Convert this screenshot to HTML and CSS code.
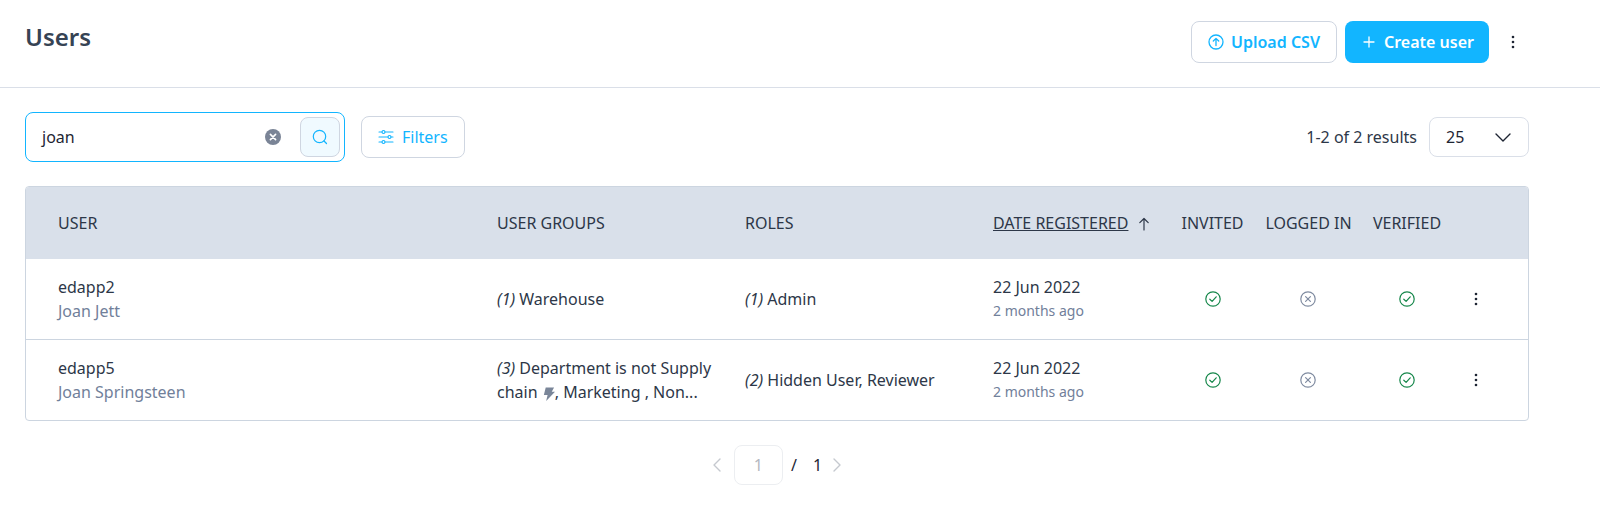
FILE: index.html
```html
<!DOCTYPE html>
<html lang="en">
<head>
<meta charset="utf-8">
<title>Users</title>
<link rel="stylesheet" href="styles.css">
</head>
<body>
<header class="topbar">
  <h1 class="title">Users</h1>
  <div class="actions">
    <button class="btn btn-outline">
      <svg class="ico16" viewBox="0 0 16 16" fill="none" stroke="currentColor" stroke-width="1.3" stroke-linecap="round" stroke-linejoin="round"><circle cx="8" cy="8" r="7"/><path d="M8 11.5v-7M5.3 7 8 4.4 10.7 7"/></svg>
      Upload CSV
    </button>
    <button class="btn btn-primary">
      <svg class="ico12" viewBox="0 0 12 12" fill="none" stroke="currentColor" stroke-width="1.3" stroke-linecap="round"><path d="M6 1v10M1 6h10"/></svg>
      Create user
    </button>
    <svg class="dots top-dots" viewBox="0 0 4 14" fill="#1e2533"><circle cx="2" cy="2" r="1.3"/><circle cx="2" cy="7" r="1.3"/><circle cx="2" cy="12" r="1.3"/></svg>
  </div>
</header>

<section class="toolbar">
  <div class="search">
    <span class="search-value">joan</span>
    <svg class="clear" viewBox="0 0 16 16"><circle cx="8" cy="8" r="8" fill="#7a8496"/><path d="M5.4 5.4l5.2 5.2M10.6 5.4l-5.2 5.2" stroke="#fff" stroke-width="1.6" stroke-linecap="round"/></svg>
    <span class="search-btn">
      <svg class="ico16" viewBox="0 0 16 16" fill="none" stroke="currentColor" stroke-width="1.2" stroke-linecap="round"><circle cx="7.5" cy="7.5" r="6.2"/><path d="M12 12l2.5 2.5"/></svg>
    </span>
  </div>
  <button class="btn-filter">
    <svg class="ico16" viewBox="0 0 16 16" fill="none" stroke="currentColor" stroke-width="1.1" stroke-linecap="round"><path d="M1 3h3M7 3h8M1 8h9M13 8h2M1 13h3M7 13h8"/><circle cx="5.5" cy="3" r="1.5"/><circle cx="11.5" cy="8" r="1.5"/><circle cx="5.5" cy="13" r="1.5"/></svg>
    Filters
  </button>
  <div class="summary">
    <span class="results">1-2 of 2 results</span>
    <div class="select">
      <span>25</span>
      <svg class="chev" viewBox="0 0 16 9" fill="none" stroke="#1e2533" stroke-width="1.4" stroke-linecap="round" stroke-linejoin="round"><path d="M1 1l7 7 7-7"/></svg>
    </div>
  </div>
</section>

<div class="table-wrap">
  <table class="users">
    <colgroup>
      <col class="c-user"><col class="c-groups"><col class="c-roles"><col class="c-date"><col class="c-inv"><col class="c-log"><col class="c-ver"><col class="c-act">
    </colgroup>
    <thead>
      <tr>
        <th class="first">USER</th>
        <th>USER GROUPS</th>
        <th>ROLES</th>
        <th><span class="sort">DATE REGISTERED</span><svg class="arrow" viewBox="0 0 14 14" fill="none" stroke="currentColor" stroke-width="1.2" stroke-linecap="round" stroke-linejoin="round"><path d="M7 13V1.5M2.8 5.7 7 1.5l4.2 4.2"/></svg></th>
        <th class="mid">INVITED</th>
        <th class="mid">LOGGED IN</th>
        <th class="mid">VERIFIED</th>
        <th></th>
      </tr>
    </thead>
    <tbody>
      <tr>
        <td class="first"><div>edapp2</div><div class="sub">Joan Jett</div></td>
        <td><i>(1)</i> Warehouse</td>
        <td><i>(1)</i> Admin</td>
        <td><div>22 Jun 2022</div><div class="sub date">2 months ago</div></td>
        <td class="mid"><svg class="status ok" viewBox="0 0 16 16" fill="none" stroke="currentColor" stroke-width="1.2" stroke-linecap="round" stroke-linejoin="round"><circle cx="8" cy="8" r="7.2"/><path d="M4.8 8.2 7.1 10.4 11.2 5.8"/></svg></td>
        <td class="mid"><svg class="status no shift" viewBox="0 0 16 16" fill="none" stroke="currentColor" stroke-width="1.2" stroke-linecap="round"><circle cx="8" cy="8" r="7.2"/><path d="M5.6 5.6l4.8 4.8M10.4 5.6l-4.8 4.8"/></svg></td>
        <td class="mid"><svg class="status ok" viewBox="0 0 16 16" fill="none" stroke="currentColor" stroke-width="1.2" stroke-linecap="round" stroke-linejoin="round"><circle cx="8" cy="8" r="7.2"/><path d="M4.8 8.2 7.1 10.4 11.2 5.8"/></svg></td>
        <td class="act"><svg class="dots" viewBox="0 0 4 14" fill="#1e2533"><circle cx="2" cy="2" r="1.3"/><circle cx="2" cy="7" r="1.3"/><circle cx="2" cy="12" r="1.3"/></svg></td>
      </tr>
      <tr>
        <td class="first"><div>edapp5</div><div class="sub">Joan Springsteen</div></td>
        <td><div class="clamp"><i>(3)</i> Department is not Supply chain <svg class="bolt" viewBox="0 0 14 16" fill="#7a8699"><path d="M4 1h9l-2.5 4.5H14L4.5 15.5 6 9H2z"/></svg>, Marketing , Non...</div></td>
        <td><i>(2)</i> Hidden User, Reviewer</td>
        <td><div>22 Jun 2022</div><div class="sub date">2 months ago</div></td>
        <td class="mid"><svg class="status ok" viewBox="0 0 16 16" fill="none" stroke="currentColor" stroke-width="1.2" stroke-linecap="round" stroke-linejoin="round"><circle cx="8" cy="8" r="7.2"/><path d="M4.8 8.2 7.1 10.4 11.2 5.8"/></svg></td>
        <td class="mid"><svg class="status no shift" viewBox="0 0 16 16" fill="none" stroke="currentColor" stroke-width="1.2" stroke-linecap="round"><circle cx="8" cy="8" r="7.2"/><path d="M5.6 5.6l4.8 4.8M10.4 5.6l-4.8 4.8"/></svg></td>
        <td class="mid"><svg class="status ok" viewBox="0 0 16 16" fill="none" stroke="currentColor" stroke-width="1.2" stroke-linecap="round" stroke-linejoin="round"><circle cx="8" cy="8" r="7.2"/><path d="M4.8 8.2 7.1 10.4 11.2 5.8"/></svg></td>
        <td class="act"><svg class="dots" viewBox="0 0 4 14" fill="#1e2533"><circle cx="2" cy="2" r="1.3"/><circle cx="2" cy="7" r="1.3"/><circle cx="2" cy="12" r="1.3"/></svg></td>
      </tr>
    </tbody>
  </table>
</div>

<nav class="pager">
  <svg class="pg-chev" viewBox="0 0 8 14" fill="none" stroke="#c5c9cf" stroke-width="1.4" stroke-linecap="round" stroke-linejoin="round"><path d="M7 1 1 7l6 6"/></svg>
  <span class="pg-input">1</span>
  <span class="pg-slash">/</span>
  <span class="pg-total">1</span>
  <svg class="pg-chev" viewBox="0 0 8 14" fill="none" stroke="#c5c9cf" stroke-width="1.4" stroke-linecap="round" stroke-linejoin="round"><path d="M1 1l6 6-6 6"/></svg>
</nav>
</body>
</html>
```
FILE: styles.css
```css
* { box-sizing: border-box; }
html, body { margin: 0; padding: 0; }
body {
  background: #fff;
  color: #2d3748;
  font-family: "Noto Sans", "Liberation Sans", sans-serif;
  font-size: 16px;
  height: 523px;
  overflow: hidden;
}
svg { display: inline-block; flex: none; }
.ico16 { width: 16px; height: 16px; }
.ico12 { width: 12px; height: 12px; }
.topbar {
  height: 88px;
  border-bottom: 1px solid #dadfe8;
  display: flex;
  justify-content: space-between;
  padding: 20px 0 0 25px;
}
.title {
  margin: 0;
  font-size: 24px;
  line-height: 33px;
  font-weight: 600;
  color: #364354;
}
.actions {
  display: flex;
  align-items: flex-start;
  gap: 8px;
  padding: 1px 85px 0 0;
}
.btn {
  height: 42px;
  border-radius: 8px;
  font: 600 16px "Noto Sans", sans-serif;
  display: flex;
  align-items: center;
  cursor: pointer;
}
.btn-outline {
  width: 146px;
  padding: 0 0 0 16px;
  gap: 7px;
  background: #fff;
  color: #12b5ff;
  border: 1px solid #cfd6e1;
}
.btn-primary {
  width: 144px;
  padding: 0 0 0 18px;
  gap: 9px;
  background: #12b5ff;
  color: #fff;
  border: 0;
}
.dots { width: 4px; height: 14px; display: block; }
.top-dots { margin: 14px 0 0 14px; }
.toolbar {
  display: flex;
  align-items: center;
  height: 50px;
  margin: 24px 71px 0 25px;
}
.search {
  width: 320px;
  height: 50px;
  border: 1px solid #12b5ff;
  border-radius: 8px;
  display: flex;
  align-items: center;
  padding: 0 4px 0 16px;
  color: #1e2533;
}
.search-value { flex: 1; }
.clear { width: 16px; height: 16px; margin-right: 19px; }
.search-btn {
  width: 40px;
  height: 40px;
  border: 1px solid #cfd6e1;
  border-radius: 8px;
  background: #f0faff;
  color: #12b5ff;
  display: flex;
  align-items: center;
  justify-content: center;
}
.btn-filter {
  margin-left: 16px;
  width: 104px;
  height: 42px;
  padding: 0 0 0 16px;
  border: 1px solid #cfd6e1;
  border-radius: 8px;
  background: #fff;
  color: #12b5ff;
  font: 400 16px "Noto Sans", sans-serif;
  display: flex;
  align-items: center;
  gap: 8px;
}
.summary {
  margin-left: auto;
  display: flex;
  align-items: center;
  gap: 12px;
}
.select {
  width: 100px;
  height: 40px;
  border: 1px solid #dadfe8;
  border-radius: 8px;
  padding: 0 17px 0 16px;
  display: flex;
  align-items: center;
  justify-content: space-between;
  color: #1e2533;
}
.chev { width: 16px; height: 9px; }
.table-wrap {
  margin: 24px 71px 0 25px;
  border: 1px solid #ccd5e0;
  border-radius: 4px;
  overflow: hidden;
}
.users {
  width: 100%;
  border-collapse: collapse;
  table-layout: fixed;
}
.c-user { width: 463px; }
.c-groups { width: 248px; }
.c-roles { width: 248px; }
.c-date { width: 188px; }
.c-inv { width: 79px; }
.c-log { width: 113px; }
.c-ver { width: 84px; }
th {
  height: 72px;
  background: #d9e0ea;
  font-size: 16px;
  font-weight: 400;
  text-align: left;
  padding: 0 8px;
  white-space: nowrap;
}
td {
  height: 81px;
  padding: 0 8px;
  line-height: 24px;
  border-top: 1px solid #ccd5e0;
}
tbody tr:first-child td { border-top: 0; height: 80px; }
.first { padding-left: 32px; }
.mid { text-align: center; padding: 0; }
.sort { text-decoration: underline; }
.arrow { width: 14px; height: 14px; margin-left: 9px; vertical-align: -2px; }
.sub { color: #71809a; }
.date { font-size: 14px; line-height: 24px; }
.bolt { width: 13px; height: 16px; vertical-align: -4px; }
.status { width: 16px; height: 16px; display: block; margin: 0 auto; }
.shift { transform: translateX(-1px); }
.ok { color: #15874a; }
.no { color: #7f8ba0; }
.act { padding-left: 25px; }
.pager {
  margin: 24px 71px 0 25px;
  display: flex;
  align-items: center;
  justify-content: center;
  height: 40px;
}
.pg-chev { width: 8px; height: 14px; }
.pg-input {
  width: 49px;
  height: 40px;
  margin: 0 0 0 13px;
  border: 1px solid #eceef1;
  border-radius: 8px;
  display: flex;
  align-items: center;
  justify-content: center;
  color: #b4b8bf;
}
.pg-slash { margin-left: 8px; color: #1e2533; }
.pg-total { margin: 0 11px 0 16px; color: #1e2533; }
```
